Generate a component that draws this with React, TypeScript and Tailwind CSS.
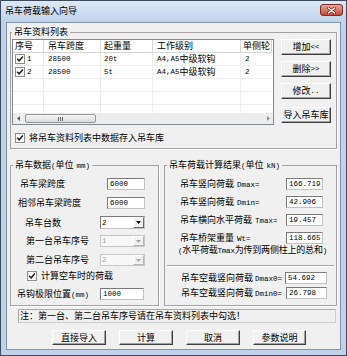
import React from 'react';

const mono = "font-['Liberation_Mono',monospace] text-[7.5px]";

const L = ({ children, className = '' }: { children: React.ReactNode; className?: string }) => (
  <span className={`${mono} ${className}`}>{children}</span>
);

const CheckBox = () => (
  <svg width="10" height="10" viewBox="0 0 10 10" className="shrink-0">
    <rect x="0.5" y="0.5" width="9" height="9" fill="#fff" stroke="#8e8f8f" />
    <path d="M2.2 4.8 L4.1 6.8 L7.9 2.6" stroke="#1e1e1e" strokeWidth="1.5" fill="none" />
  </svg>
);

const Button = ({ children, className = '' }: { children: React.ReactNode; className?: string }) => (
  <div
    className={`flex items-center justify-center bg-[#f0f0f0] border border-t-white border-l-white border-r-[#404040] border-b-[#404040] shadow-[inset_-1px_-1px_0_#a0a0a0] leading-[12px] ${className}`}
  >
    {children}
  </div>
);

const Field = ({ value, className = '' }: { value: string; className?: string }) => (
  <div
    className={`h-full flex items-center pl-[2px] bg-white border border-[#c2c2c2] border-t-[#7a7a7a] border-l-[#7a7a7a] ${className}`}
  >
    <L>{value}</L>
  </div>
);

const Arrow = ({ color }: { color: string }) => (
  <svg width="5" height="3" viewBox="0 0 5 3">
    <path d="M0 0 H5 L2.5 3 Z" fill={color} />
  </svg>
);

const Combo = ({ value, disabled = false }: { value: string; disabled?: boolean }) => (
  <div
    className={`w-[45px] h-full flex border ${
      disabled
        ? 'border-[#c8c8c8] bg-[#f7f7f7] text-[#a3a3a3]'
        : 'border-[#c2c2c2] border-t-[#7a7a7a] border-l-[#7a7a7a] bg-white'
    }`}
  >
    <div className="flex-1 flex items-center pl-[1px]">
      <L>{value}</L>
    </div>
    <div
      className={`w-[11px] flex items-center justify-center bg-[#f0f0f0] border ${
        disabled
          ? 'border-t-white border-l-white border-r-[#b5b5b5] border-b-[#b5b5b5]'
          : 'border-t-white border-l-white border-r-[#696969] border-b-[#696969]'
      }`}
    >
      <Arrow color={disabled ? '#a8a8a8' : '#000'} />
    </div>
  </div>
);

const groupBox = 'border border-[#a3a3a3] shadow-[1px_1px_0_#fff]';

const CraneList = () => {
  const rows = [
    { no: '1', load: '20t' },
    { no: '2', load: '5t' },
  ];
  const cell = 'shrink-0 h-full flex items-center whitespace-nowrap overflow-hidden border-r';
  return (
    <div className="ml-[1px] mt-[1px] w-[262px] h-[86px] border border-[#828790] bg-white flex flex-col overflow-hidden">
      <div className="h-[13px] shrink-0 flex border-b border-[#d5d5d5] overflow-hidden">
        <div className={`${cell} w-[31px] pl-[2px] border-[#d5d5d5]`}>序号</div>
        <div className={`${cell} w-[57px] pl-[4px] border-[#d5d5d5]`}>吊车跨度</div>
        <div className={`${cell} w-[52px] pl-[3px] border-[#d5d5d5]`}>起重量</div>
        <div className={`${cell} w-[88px] pl-[4px] border-[#d5d5d5]`}>工作级别</div>
        <div className={`${cell} w-[31px] pl-[2px] border-[#d5d5d5]`}>单侧轮</div>
      </div>
      <div className="flex-1 overflow-hidden">
        {rows.map((r) => (
          <div key={r.no} className="h-[13px] flex border-b border-[#ededed]">
            <div className={`${cell} w-[31px] pl-[2px] gap-[2px] border-[#ededed]`}>
              <CheckBox />
              <L>{r.no}</L>
            </div>
            <div className={`${cell} w-[57px] pl-[4px] border-[#ededed]`}>
              <L>28500</L>
            </div>
            <div className={`${cell} w-[52px] pl-[3px] border-[#ededed]`}>
              <L>{r.load}</L>
            </div>
            <div className={`${cell} w-[88px] pl-[4px] border-[#ededed]`}>
              <L>A4,A5</L>中级软钩
            </div>
            <div className={`${cell} w-[60px] pl-[4px] border-[#ededed]`}>
              <L>2</L>
            </div>
          </div>
        ))}
        {[0, 1, 2].map((i) => (
          <div key={i} className="h-[13px] flex border-b border-[#ededed]">
            <div className={`${cell} w-[31px] border-[#ededed]`} />
            <div className={`${cell} w-[57px] border-[#ededed]`} />
            <div className={`${cell} w-[52px] border-[#ededed]`} />
            <div className={`${cell} w-[88px] border-[#ededed]`} />
            <div className={`${cell} w-[60px] border-[#ededed]`} />
          </div>
        ))}
      </div>
      <div className="h-[11px] shrink-0 flex items-center bg-[#ececec]">
        <div className="w-[10px] flex items-center justify-center">
          <svg width="3" height="5" viewBox="0 0 3 5">
            <path d="M3 0 V5 L0 2.5 Z" fill="#606060" />
          </svg>
        </div>
        <div className="ml-[2px] w-[71px] h-[9px] rounded-[2px] border border-[#979797] bg-linear-to-b from-[#f6f6f6] to-[#dadada] flex items-center justify-center">
          <svg width="6" height="4" viewBox="0 0 6 4">
            <path d="M0.5 0 V4 M2.5 0 V4 M4.5 0 V4" stroke="#6a6a6a" strokeWidth="1" />
          </svg>
        </div>
        <div className="flex-1" />
        <div className="w-[10px] flex items-center justify-center">
          <svg width="3" height="5" viewBox="0 0 3 5">
            <path d="M0 0 V5 L3 2.5 Z" fill="#909090" />
          </svg>
        </div>
      </div>
    </div>
  );
};

const LeftRow = ({
  mt,
  pl,
  w,
  label,
  h = 'h-[12px]',
  children,
}: {
  mt: string;
  pl: string;
  w: string;
  label: React.ReactNode;
  h?: string;
  children: React.ReactNode;
}) => (
  <div className={`${mt} ${h} flex items-center`}>
    <div className={`${w} ${pl} shrink-0 whitespace-nowrap`}>{label}</div>
    {children}
  </div>
);

const ResultRow = ({
  mt,
  pl = 'pl-[15px]',
  w = 'w-[121px]',
  label,
  tag,
  value,
  fw = 'w-[37px]',
  gap = 'ml-[3px]',
}: {
  mt: string;
  pl?: string;
  w?: string;
  label: string;
  tag: string;
  value: string;
  fw?: string;
  gap?: string;
}) => (
  <div className={`${mt} h-[12px] flex items-center`}>
    <div className={`${w} ${pl} shrink-0 whitespace-nowrap overflow-hidden`}>
      {label}
      <L className={gap}>{tag}</L>
    </div>
    <Field value={value} className={fw} />
  </div>
);

export default function App() {
  return (
    <div className="w-[347px] h-[356px] border border-[#3c4b5e] bg-[#bfd2ea] flex flex-col overflow-hidden text-black text-[9px] leading-[12px] font-['Noto_Sans_CJK_SC',sans-serif]">
      <div className="h-[21px] shrink-0 flex items-start justify-between bg-linear-to-b from-[#dde9f7] to-[#bfd2ea]">
        <span className="ml-[4px] mt-[4px]">吊车荷载输入向导</span>
        <div className="mt-[3px] mr-[3px] w-[23px] h-[12px] rounded-[3px] border border-[#7b2d26] bg-linear-to-b from-[#e7a596] to-[#c5473a] flex items-center justify-center">
          <svg width="9" height="7" viewBox="0 0 9 7">
            <path d="M1.5 1 L7.5 6 M7.5 1 L1.5 6" stroke="#5a1a14" strokeWidth="2.6" strokeLinecap="round" />
            <path d="M1.5 1 L7.5 6 M7.5 1 L1.5 6" stroke="#fff" strokeWidth="1.4" strokeLinecap="round" />
          </svg>
        </div>
      </div>

      <div className="mx-[5px] mb-[5px] flex-1 border border-[#8194ad] bg-[#f0f0f0] flex flex-col">
        <fieldset className={`mt-[3px] ml-[3px] w-[327px] h-[123px] shrink-0 ${groupBox}`}>
          <legend className="ml-[1px] px-[2px] leading-[12px]">吊车资料列表</legend>
          <div className="flex">
            <CraneList />
            <div className="ml-[7px] mt-[1px] flex flex-col">
              <Button className="w-[50px] h-[16px]">
                增加<L>&lt;&lt;</L>
              </Button>
              <Button className="w-[50px] h-[16px] mt-[6px]">
                删除<L>&gt;&gt;</L>
              </Button>
              <Button className="w-[50px] h-[16px] mt-[6px]">
                修改<L>..</L>
              </Button>
              <Button className="w-[50px] h-[16px] mt-[8px]">导入吊车库</Button>
            </div>
          </div>
          <div className="mt-[7px] ml-[4px] h-[12px] flex items-center gap-[4px]">
            <CheckBox />
            <span>将吊车资料列表中数据存入吊车库</span>
          </div>
        </fieldset>

        <div className="mt-[10px] ml-[3px] flex gap-[5px] shrink-0">
          <fieldset className={`w-[149px] h-[147px] ${groupBox}`}>
            <legend className="ml-[2px] px-[2px] leading-[12px]">
              吊车数据<L>(</L>单位<L className="ml-[3px]">mm)</L>
            </legend>
            <LeftRow mt="mt-[6px]" pl="pl-[9px]" w="w-[96px]" label="吊车梁跨度">
              <Field value="6000" className="w-[38px]" />
            </LeftRow>
            <LeftRow mt="mt-[7px]" pl="pl-[7px]" w="w-[96px]" label="相邻吊车梁跨度">
              <Field value="6000" className="w-[38px]" />
            </LeftRow>
            <LeftRow mt="mt-[7px]" h="h-[13px]" pl="pl-[14px]" w="w-[89px]" label="吊车台数">
              <Combo value="2" />
            </LeftRow>
            <LeftRow mt="mt-[6px]" pl="pl-[15px]" w="w-[89px]" label="第一台吊车序号">
              <Combo value="1" disabled />
            </LeftRow>
            <LeftRow mt="mt-[7px]" pl="pl-[15px]" w="w-[89px]" label="第二台吊车序号">
              <Combo value="2" disabled />
            </LeftRow>
            <div className="mt-[4px] h-[12px] pl-[16px] flex items-center gap-[4px]">
              <CheckBox />
              <span>计算空车时的荷载</span>
            </div>
            <LeftRow
              mt="mt-[6px]"
              pl="pl-[6px]"
              w="w-[89px]"
              label={
                <>
                  吊钩极限位置<L>(mm)</L>
                </>
              }
            >
              <Field value="1000" className="w-[44px]" />
            </LeftRow>
          </fieldset>

          <fieldset className={`w-[173px] h-[147px] ${groupBox}`}>
            <legend className="ml-[2px] px-[2px] leading-[12px]">
              吊车荷载计算结果<L>(</L>单位<L className="ml-[3px]">kN)</L>
            </legend>
            <ResultRow mt="mt-[6px]" label="吊车竖向荷载" tag="Dmax=" value="166.719" />
            <ResultRow mt="mt-[6px]" label="吊车竖向荷载" tag="Dmin=" value="42.906" />
            <ResultRow mt="mt-[6px]" label="吊车横向水平荷载" tag="Tmax=" value="19.457" />
            <ResultRow mt="mt-[6px]" label="吊车桥架重量" tag="Wt=" value="118.665" />
            <div className="h-[12px] pl-[13px] whitespace-nowrap tracking-[-0.2px]">
              <L>(</L>水平荷载<L>Tmax</L>为传到两侧柱上的总和<L>)</L>
            </div>
            <div className="mt-[9px] mx-[2px] h-[2px] border-t border-b border-t-[#a3a3a3] border-b-white" />
            <ResultRow
              mt="mt-[5px]"
              pl="pl-[16px]"
              w="w-[120px]"
              gap="ml-[2px]"
              label="吊车空载竖向荷载"
              tag="Dmax0="
              value="54.692"
              fw="w-[42px]"
            />
            <ResultRow
              mt="mt-[3px]"
              pl="pl-[16px]"
              w="w-[121px]"
              gap="ml-[2px]"
              label="吊车空载竖向荷载"
              tag="Dmin0="
              value="26.798"
              fw="w-[41px]"
            />
          </fieldset>
        </div>

        <div className="mt-[3px] ml-[11px] w-[318px] h-[14px] shrink-0 flex items-center pl-[1px] whitespace-nowrap border border-[#d0d0d0] border-t-[#a8a8a8] border-l-[#a8a8a8]">
          注：第一台、第二台吊车序号请在吊车资料列表中勾选！
        </div>

        <div className="mt-[7px] ml-[45px] flex gap-[13px] shrink-0">
          <Button className="w-[54px] h-[15px]">直接导入</Button>
          <Button className="w-[54px] h-[15px]">计算</Button>
          <Button className="w-[54px] h-[15px]">取消</Button>
          <Button className="w-[53px] h-[15px]">参数说明</Button>
        </div>
      </div>
    </div>
  );
}
